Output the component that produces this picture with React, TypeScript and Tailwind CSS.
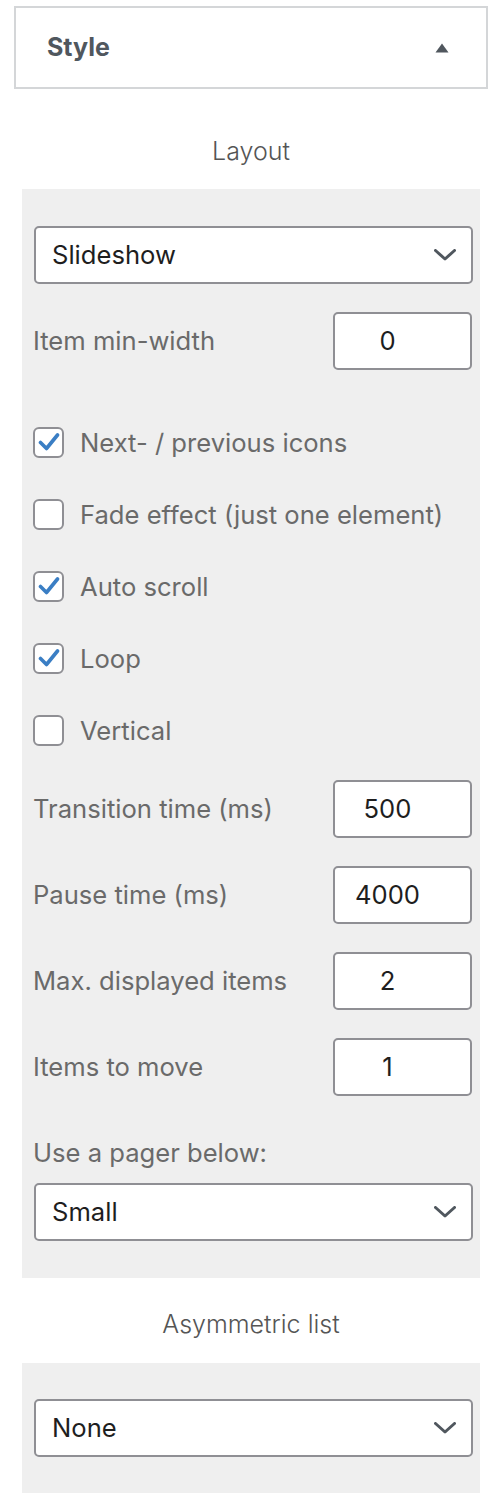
import React from "react";

const font = { fontFamily: '"Inter", "Liberation Sans", sans-serif' };

function Chevron() {
  return (
    <svg width="22" height="12" viewBox="0 0 22 12" className="shrink-0">
      <path d="M1.5 1.5 L11 10 L20.5 1.5" fill="none" stroke="#50575e" strokeWidth="3" strokeLinecap="round" strokeLinejoin="round" />
    </svg>
  );
}

function Select({ value }: { value: string }) {
  return (
    <div className="flex h-[58px] w-[439px] items-center justify-between rounded-[5px] border-2 border-[#8f8f94] bg-white pl-[16px] pr-[15px]">
      <span className="text-[25.6px] text-[#1e1e1e]">{value}</span>
      <Chevron />
    </div>
  );
}

function NumberRow({ label, value }: { label: string; value: string }) {
  return (
    <div className="flex h-[58px] w-[438px] items-center justify-between">
      <span className="-ml-[1px] text-[25.6px] text-[#6a6a6a]">{label}</span>
      <div className="flex h-[58px] w-[139px] items-center justify-center rounded-[5px] border-2 border-[#8f8f94] bg-white pr-[30px]">
        <span className="text-[25.6px] text-[#1e1e1e]">{value}</span>
      </div>
    </div>
  );
}

function Check({ label, checked }: { label: string; checked: boolean }) {
  return (
    <div className="flex h-[72px] items-center">
      <div className="flex h-[31px] w-[31px] items-center justify-center rounded-[6px] border-2 border-[#8f8f94] bg-white">
        {checked && (
          <svg width="22" height="20" viewBox="0 0 22 20">
            <path d="M2.5 10.5 L8.5 16.5 L19.5 3" fill="none" stroke="#3a7ec4" strokeWidth="3.6" strokeLinecap="round" strokeLinejoin="round" />
          </svg>
        )}
      </div>
      <span className="ml-[16px] pt-[3px] text-[25.6px] text-[#6a6a6a]">{label}</span>
    </div>
  );
}

export default function App() {
  return (
    <div className="w-[502px] bg-white pt-[6px] pb-[10px]" style={font}>
      <div className="mx-[14px] flex h-[83px] items-center justify-between border-2 border-[#d4d6d8] pl-[31px] pr-[37px]">
        <span className="text-[25px] font-bold text-[#50575e]">Style</span>
        <svg width="14" height="10" viewBox="0 0 14 10">
          <path d="M7 0.5 L13.5 9.5 L0.5 9.5 Z" fill="#50575e" />
        </svg>
      </div>

      <div className="mt-[46px] mb-[22px] text-center text-[25px] leading-[32px] font-light text-[#555555]">Layout</div>

      <div className="mx-[22px] bg-[#efefef] pt-[37px] pb-[37px] pl-[12px]">
        <Select value="Slideshow" />
        <div className="mt-[28px]">
          <NumberRow label="Item min-width" value="0" />
        </div>
        <div className="mt-[36px] -ml-[1px]">
          <Check label="Next- / previous icons" checked />
          <Check label="Fade effect (just one element)" checked={false} />
          <Check label="Auto scroll" checked />
          <Check label="Loop" checked />
          <Check label="Vertical" checked={false} />
        </div>
        <div className="mt-[14px] flex flex-col gap-[28px]">
          <NumberRow label="Transition time (ms)" value="500" />
          <NumberRow label="Pause time (ms)" value="4000" />
          <NumberRow label="Max. displayed items" value="2" />
          <NumberRow label="Items to move" value="1" />
        </div>
        <div className="mt-[41px] -ml-[1px] text-[25.6px] leading-[32px] text-[#6a6a6a]">Use a pager below:</div>
        <div className="mt-[14px]">
          <Select value="Small" />
        </div>
      </div>

      <div className="mt-[30px] mb-[23px] text-center text-[25px] leading-[32px] font-light text-[#555555]">Asymmetric list</div>

      <div className="mx-[22px] bg-[#efefef] pt-[36px] pb-[36px] pl-[12px]">
        <Select value="None" />
      </div>
    </div>
  );
}
